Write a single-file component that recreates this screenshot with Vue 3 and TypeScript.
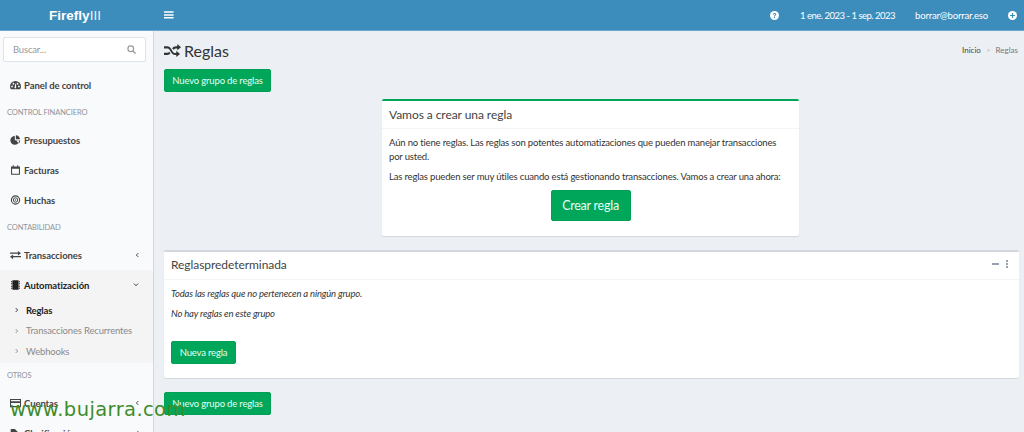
<script setup lang="ts">
interface NavItem { kind: 'head' | 'item'; label: string; icon?: string; arrow?: boolean }
const navTop: NavItem[] = [
  { kind: 'item', label: 'Panel de control', icon: 'gauge' },
  { kind: 'head', label: 'CONTROL FINANCIERO' },
  { kind: 'item', label: 'Presupuestos', icon: 'pie' },
  { kind: 'item', label: 'Facturas', icon: 'cal' },
  { kind: 'item', label: 'Huchas', icon: 'target' },
  { kind: 'head', label: 'CONTABILIDAD' },
  { kind: 'item', label: 'Transacciones', icon: 'swap', arrow: true },
]
const navBottom: NavItem[] = [
  { kind: 'head', label: 'OTROS' },
  { kind: 'item', label: 'Cuentas', icon: 'card', arrow: true },
  { kind: 'item', label: 'Clasificación', icon: 'tag', arrow: true },
]
const subs = ['Reglas', 'Transacciones Recurrentes', 'Webhooks']
</script>

<template>
  <div class="page">
    <header class="topbar">
      <div class="logo"><b>Firefly</b><span>III</span></div>
      <svg class="bars" viewBox="0 0 10 8" width="10" height="8"><path d="M0 0.3h9.6v1.5H0zM0 3.2h9.6v1.5H0zM0 6.1h9.6v1.5H0z" fill="#fff" /></svg>
      <div class="top-right">
        <svg class="top-ico" viewBox="0 0 16 16" width="9" height="9"><circle cx="8" cy="8" r="8" fill="#fff" /><path d="M5.2 6.2C5.3 4.5 6.5 3.5 8.2 3.5c1.700 0 2.900 1 2.900 2.400 0 2.100-2.300 2-2.300 3.800H7c0-2.700 2.200-2.600 2.200-3.700 0-.5-.4-.9-1.100-.9-.7 0-1.100.4-1.200 1.100zM7 10.500h1.900v1.900H7z" fill="#3c8dbc" /></svg>
        <span class="date">1 ene. 2023 - 1 sep. 2023</span>
        <span class="mail">borrar@borrar.eso</span>
        <svg class="top-ico plus" viewBox="0 0 16 16" width="9" height="9"><circle cx="8" cy="8" r="8" fill="#fff" /><path d="M7 3.500h2V7h3.500v2H9v3.500H7V9H3.500V7H7z" fill="#3c8dbc" /></svg>
      </div>
    </header>

    <div class="body">
      <aside class="sidebar">
        <div class="search">
          <span>Buscar...</span>
          <svg viewBox="0 0 12 12" width="9" height="9"><circle cx="5" cy="5" r="3.800" fill="none" stroke="#999" stroke-width="1.600" /><path d="M8 8l3.400 3.400" stroke="#999" stroke-width="1.800" /></svg>
        </div>
        <template v-for="n in navTop" :key="n.label">
          <div v-if="n.kind === 'head'" class="head">{{ n.label }}</div>
          <div v-else class="item">
            <svg class="nav-ico" viewBox="0 0 16 14" width="11" height="10">
              <path v-if="n.icon === 'gauge'" d="M8 1a8 8 0 0 0-8 8c0 1.700.5 3 1.300 4h13.400C15.500 12 16 10.700 16 9a8 8 0 0 0-8-8zM3 10.500a1.300 1.300 0 1 1 0-2.600 1.300 1.300 0 0 1 0 2.600zm2-4a1.300 1.300 0 1 1 0-2.600 1.300 1.300 0 0 1 0 2.600zM9 10c.2 1-.4 2-1.300 2S6.200 11 6.700 10l1-5h1zm2-3.500a1.300 1.300 0 1 1 0-2.600 1.300 1.300 0 0 1 0 2.600zm2 4a1.300 1.300 0 1 1 0-2.600 1.300 1.300 0 0 1 0 2.600z" fill="#444" fill-rule="evenodd" />
              <path v-else-if="n.icon === 'pie'" d="M7 1a6.500 6.500 0 1 0 6.500 6.500H7zM8.500 0v6h6a6 6 0 0 0-6-6zM9 7.800h6a6 6 0 0 1-2.200 4.200z" fill="#444" />
              <path v-else-if="n.icon === 'cal'" d="M4 0h1.500v2h5V0H12v2h2.500v12h-13V2H4zM3 5v7.500h10V5z" fill="#444" fill-rule="evenodd" />
              <g v-else-if="n.icon === 'target'" fill="none" stroke="#444"><circle cx="8" cy="7" r="6" stroke-width="1.600" /><circle cx="8" cy="7" r="3.200" stroke-width="1.400" /><circle cx="8" cy="7" r="1" fill="#444" stroke="none" /></g>
              <path v-else-if="n.icon === 'swap'" d="M0 3.500h11.500V1L16 4.400l-4.500 3.200V5H0zM16 8.500H4.500V6.200L0 9.600l4.500 3.400v-2.600H16z" fill="#444" />
              <path v-else-if="n.icon === 'card'" d="M0 1h16v12H0zm1.500 1.500v2h13v-2zm0 4.500v4.500h13V7z" fill="#444" fill-rule="evenodd" />
              <path v-else d="M1 1h6l7 7-5.500 5.500-7.500-7z" fill="#444" />
            </svg>
            <span class="label">{{ n.label }}</span>
            <svg v-if="n.arrow" class="arrow" viewBox="0 0 6 8" width="4" height="6"><path d="M5 1L2 4l3 3" fill="none" stroke="#555" stroke-width="1.500" /></svg>
          </div>
        </template>

        <div class="active-group">
          <div class="item current">
            <svg class="nav-ico" viewBox="0 0 16 14" width="11" height="10"><path d="M3.500 0h9v14h-9zM1.500 1.500h1.500v1.500H1.500zM1.500 4.500h1.500V6H1.500zM1.500 8h1.500v1.500H1.500zM1.500 11h1.500v1.500H1.500zM13 1.500h1.500v1.500H13zM13 4.500h1.500V6H13zM13 8h1.500v1.500H13zM13 11h1.500v1.500H13z" fill="#222" /></svg>
            <span class="label">Automatización</span>
            <svg class="arrow" viewBox="0 0 8 6" width="6" height="4"><path d="M1 1l3 3 3-3" fill="none" stroke="#333" stroke-width="1.500" /></svg>
          </div>
          <div v-for="(s, i) in subs" :key="s" class="sub" :class="{ on: i === 0 }">
            <svg viewBox="0 0 6 8" width="4" height="6"><path d="M1 1l3 3-3 3" fill="none" :stroke="i === 0 ? '#222' : '#888'" stroke-width="1.300" /></svg>
            <span>{{ s }}</span>
          </div>
        </div>

        <template v-for="n in navBottom" :key="n.label">
          <div v-if="n.kind === 'head'" class="head">{{ n.label }}</div>
          <div v-else class="item">
            <svg class="nav-ico" viewBox="0 0 16 14" width="11" height="10">
              <path v-if="n.icon === 'card'" d="M0 1h16v12H0zm1.500 1.500v2h13v-2zm0 4.500v4.500h13V7z" fill="#444" fill-rule="evenodd" />
              <path v-else d="M1 1h6l7 7-5.500 5.500-7.500-7z" fill="#444" />
            </svg>
            <span class="label">{{ n.label }}</span>
            <svg class="arrow" viewBox="0 0 6 8" width="4" height="6"><path d="M5 1L2 4l3 3" fill="none" stroke="#555" stroke-width="1.500" /></svg>
          </div>
        </template>
      </aside>

      <main class="main">
        <div class="title-row">
          <svg viewBox="0 0 17 13" width="17" height="13"><path d="M0 2.300h3.200c2 0 3 1 4.200 3l1 1.600c.9 1.400 1.500 2.100 2.900 2.100h1V6.800l3.700 3.200-3.700 3v-2h-1c-2.200 0-3.200-1-4.400-3L6 6.400C5 4.900 4.500 4.400 3.200 4.400H0zM0 8.800h3.200c.9 0 1.400-.3 2-1l1.200 1.800c-.9 1-1.800 1.400-3.200 1.400H0zM8.100 4.400c1-1.300 2-2.100 4.200-2.100h1V0L17 3.300l-3.700 3V4.400h-1c-1.100 0-1.700.4-2.400 1.400z" fill="#333" /></svg>
          <h1>Reglas</h1>
          <div class="crumbs"><span class="c1">Inicio</span><span class="sep">&gt;</span><span class="c2">Reglas</span></div>
        </div>
        <button class="btn">Nuevo grupo de reglas</button>

        <section class="card intro">
          <div class="card-head"><h3>Vamos a crear una regla</h3></div>
          <div class="card-body">
            <p>Aún no tiene reglas. Las reglas son potentes automatizaciones que pueden manejar transacciones por usted.</p>
            <p>Las reglas pueden ser muy útiles cuando está gestionando transacciones. Vamos a crear una ahora:</p>
            <div class="center"><button class="btn big">Crear regla</button></div>
          </div>
        </section>

        <section class="card group">
          <div class="card-head">
            <h3>Reglaspredeterminada</h3>
            <div class="tools">
              <i class="minus"></i>
              <i class="dots"><b></b><b></b><b></b></i>
            </div>
          </div>
          <div class="card-body em">
            <p>Todas las reglas que no pertenecen a ningún grupo.</p>
            <p>No hay reglas en este grupo</p>
            <button class="btn small">Nueva regla</button>
          </div>
        </section>

        <button class="btn">Nuevo grupo de reglas</button>
      </main>
    </div>

    <div class="watermark">www.bujarra.com</div>
  </div>
</template>

<style>
html, body { margin: 0; overflow: hidden; }
</style>

<style scoped>
.page {
  position: relative;
  width: 1024px;
  height: 432px;
  overflow: hidden;
  font-family: Lato, sans-serif;
  font-size: 9.5px;
  letter-spacing: -0.17px;
  color: #333;
  background: #ecf0f5;
}
.topbar {
  height: 31px;
  background: #3c8dbc;
  border-bottom: 1px solid #6aa8cd;
  box-sizing: border-box;
  display: flex;
  align-items: center;
  color: #fff;
}
.logo { width: 150px; text-align: center; font-size: 13.5px; letter-spacing: 0; font-family: "Liberation Sans", sans-serif; }
.logo b { font-weight: 700; }
.logo span { font-weight: 400; opacity: .9; }
.bars { margin-left: 14px; }
.top-right { margin-left: auto; display: flex; align-items: center; }
.top-ico { display: block; }
.date { margin-left: 21px; letter-spacing: -0.5px; }
.mail { margin-left: 20px; }
.plus { margin-left: 20px; margin-right: 7px; }
.body { display: flex; height: 401px; }
.sidebar {
  width: 154px;
  flex: none;
  box-sizing: border-box;
  background: #f9fafc;
  border-right: 1px solid #d2d6de;
  padding-top: 6px;
  overflow: hidden;
}
.search {
  margin: 0 7px 0 3px;
  height: 25px;
  box-sizing: border-box;
  background: #fff;
  border: 1px solid #dfe3ea;
  border-radius: 2px;
  display: flex;
  align-items: center;
  justify-content: space-between;
  padding: 0 9px;
  color: #999;
}
.search + * { margin-top: 8px; }
.head { height: 25px; line-height: 25px; padding-left: 7px; font-size: 7.5px; letter-spacing: -0.1px; color: #8f9499; }
.item {
  height: 30px;
  display: flex;
  align-items: center;
  padding-left: 10px;
  font-weight: 700;
  letter-spacing: -0.08px;
  color: #444;
}
.nav-ico { flex: none; margin-right: 3px; }
.label { flex: 1; }
.arrow { margin-right: 14px; }
.active-group { background: #f4f4f5; padding-bottom: 1.500px; }
.current { color: #222; }
.sub {
  height: 20.500px;
  display: flex;
  align-items: center;
  padding-left: 15px;
  gap: 7px;
  color: #8a8a8a;
}
.sub.on { color: #222; font-weight: 700; }
.main { flex: 1; padding: 0 5px 0 10px; min-width: 0; }
.title-row { height: 38px; display: flex; align-items: center; }
h1 { margin: 0 0 0 3px; font-size: 16px; font-weight: 400; color: #333; letter-spacing: 0; }
.crumbs { margin-left: auto; padding-right: 1px; font-size: 8px; letter-spacing: 0; display: flex; gap: 5px; }
.c1 { color: #444; }
.sep { color: #bbb; }
.c2 { color: #777; }
.btn {
  display: block;
  height: 23px;
  width: 107px;
  padding: 0;
  font: inherit;
  letter-spacing: inherit;
  color: #e8fff3;
  background: #00a65a;
  border: 1px solid #00a055;
  border-radius: 2px;
}
.card {
  background: #fff;
  border-top: 2px solid #d2d6de;
  border-radius: 2px;
  box-shadow: 0 1px 1px rgba(0, 0, 0, .1);
  box-sizing: border-box;
}
.intro { width: 417px; margin: 7px 0 0 218px; height: 137px; border-top-color: #00a65a; }
.group { margin-top: 14px; height: 128px; }
.card-head {
  height: 28px;
  box-sizing: border-box;
  border-bottom: 1px solid #f4f4f4;
  display: flex;
  align-items: center;
  padding: 0 7px 1px;
}
.group .card-head { padding-bottom: 3px; }
h3 { margin: 0; font-size: 12px; font-weight: 400; color: #444; letter-spacing: -0.06px; }
.tools { margin-left: auto; display: flex; align-items: center; gap: 7px; padding-right: 4px; }
.minus { display: block; width: 7px; height: 2px; background: #97a0b3; }
.dots { display: flex; flex-direction: column; gap: 1px; }
.dots b { display: block; width: 2px; height: 2px; background: #97a0b3; }
.card-body { padding: 7px 10px 7px 7px; }
p { margin: 0 0 6px; line-height: 14px; }
.center { display: flex; justify-content: center; margin: 2px -3px 0 0; }
.big { width: 80px; height: 31px; font-size: 12.5px; letter-spacing: -0.25px; }
.em { font-style: italic; }
.small { width: 65px; margin-top: 20px; font-style: normal; }
.group + .btn { margin-top: 14px; }
.watermark {
  position: absolute;
  left: 10px;
  top: 398px;
  font-family: "DejaVu Sans", sans-serif;
  font-size: 19.500px;
  letter-spacing: 0.4px;
  color: #3f8c2a;
  line-height: 24px;
}
</style>
